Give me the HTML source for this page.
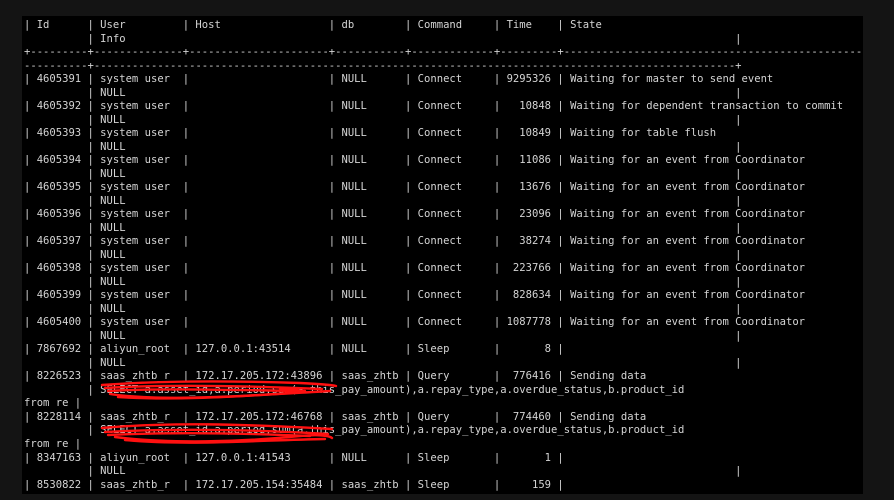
<!DOCTYPE html>
<html><head><meta charset="utf-8"><style>
html,body{margin:0;padding:0;background:#141414;width:894px;height:500px;overflow:hidden}
#t{position:absolute;left:22px;top:16px;width:841px;height:478px;background:#000}
#p{position:absolute;left:24px;top:19px;font-family:"DejaVu Sans Mono","Liberation Mono",monospace;font-size:10.55px;color:#d4d4d4}
.l{position:relative;height:13.53px;line-height:13.53px;white-space:pre}
.l>span{position:absolute;top:0}
.a{left:0}.b{left:10ch}.c{left:25ch}.d{left:48ch}.e{left:60ch}.f{left:74ch}.g{left:84ch}
.r{left:112ch}
.d1{width:132ch;overflow:hidden}
.d2{width:112ch;overflow:hidden}
svg{position:absolute;left:0;top:0}
</style></head><body>
<div id="t"></div>
<div id="p">
<div class="l"><span class="a">| Id</span><span class="b">| User</span><span class="c">| Host</span><span class="d">| db</span><span class="e">| Command</span><span class="f">| Time</span><span class="g">| State</span></div>
<div class="l"><span class="b">| Info</span><span class="r">|</span></div>
<div class="l d1">+---------+--------------+----------------------+-----------+-------------+---------+------------------------------------------------------------------</div>
<div class="l"><span class="a d2">----------+------------------------------------------------------------------------------------------------------------------</span><span class="r">+</span></div>

<div class="l"><span class="a">| 4605391</span><span class="b">| system user</span><span class="c">|</span><span class="d">| NULL</span><span class="e">| Connect</span><span class="f">| 9295326</span><span class="g">| Waiting for master to send event</span></div>
<div class="l"><span class="b">| NULL</span><span class="r">|</span></div>
<div class="l"><span class="a">| 4605392</span><span class="b">| system user</span><span class="c">|</span><span class="d">| NULL</span><span class="e">| Connect</span><span class="f">|   10848</span><span class="g">| Waiting for dependent transaction to commit</span></div>
<div class="l"><span class="b">| NULL</span><span class="r">|</span></div>
<div class="l"><span class="a">| 4605393</span><span class="b">| system user</span><span class="c">|</span><span class="d">| NULL</span><span class="e">| Connect</span><span class="f">|   10849</span><span class="g">| Waiting for table flush</span></div>
<div class="l"><span class="b">| NULL</span><span class="r">|</span></div>
<div class="l"><span class="a">| 4605394</span><span class="b">| system user</span><span class="c">|</span><span class="d">| NULL</span><span class="e">| Connect</span><span class="f">|   11086</span><span class="g">| Waiting for an event from Coordinator</span></div>
<div class="l"><span class="b">| NULL</span><span class="r">|</span></div>
<div class="l"><span class="a">| 4605395</span><span class="b">| system user</span><span class="c">|</span><span class="d">| NULL</span><span class="e">| Connect</span><span class="f">|   13676</span><span class="g">| Waiting for an event from Coordinator</span></div>
<div class="l"><span class="b">| NULL</span><span class="r">|</span></div>
<div class="l"><span class="a">| 4605396</span><span class="b">| system user</span><span class="c">|</span><span class="d">| NULL</span><span class="e">| Connect</span><span class="f">|   23096</span><span class="g">| Waiting for an event from Coordinator</span></div>
<div class="l"><span class="b">| NULL</span><span class="r">|</span></div>
<div class="l"><span class="a">| 4605397</span><span class="b">| system user</span><span class="c">|</span><span class="d">| NULL</span><span class="e">| Connect</span><span class="f">|   38274</span><span class="g">| Waiting for an event from Coordinator</span></div>
<div class="l"><span class="b">| NULL</span><span class="r">|</span></div>
<div class="l"><span class="a">| 4605398</span><span class="b">| system user</span><span class="c">|</span><span class="d">| NULL</span><span class="e">| Connect</span><span class="f">|  223766</span><span class="g">| Waiting for an event from Coordinator</span></div>
<div class="l"><span class="b">| NULL</span><span class="r">|</span></div>
<div class="l"><span class="a">| 4605399</span><span class="b">| system user</span><span class="c">|</span><span class="d">| NULL</span><span class="e">| Connect</span><span class="f">|  828634</span><span class="g">| Waiting for an event from Coordinator</span></div>
<div class="l"><span class="b">| NULL</span><span class="r">|</span></div>
<div class="l"><span class="a">| 4605400</span><span class="b">| system user</span><span class="c">|</span><span class="d">| NULL</span><span class="e">| Connect</span><span class="f">| 1087778</span><span class="g">| Waiting for an event from Coordinator</span></div>
<div class="l"><span class="b">| NULL</span><span class="r">|</span></div>
<div class="l"><span class="a">| 7867692</span><span class="b">| aliyun_root</span><span class="c">| 127.0.0.1:43514</span><span class="d">| NULL</span><span class="e">| Sleep</span><span class="f">|       8</span><span class="g">|</span></div>
<div class="l"><span class="b">| NULL</span><span class="r">|</span></div>
<div class="l"><span class="a">| 8226523</span><span class="b">| saas_zhtb_r</span><span class="c">| 172.17.205.172:43896</span><span class="d">| saas_zhtb</span><span class="e">| Query</span><span class="f">|  776416</span><span class="g">| Sending data</span></div>
<div class="l"><span class="b">| SELECT a.asset_id,a.period,sum(a.this_pay_amount),a.repay_type,a.overdue_status,b.product_id</span></div>
<div class="l"><span class="a">from re |</span></div>
<div class="l"><span class="a">| 8228114</span><span class="b">| saas_zhtb_r</span><span class="c">| 172.17.205.172:46768</span><span class="d">| saas_zhtb</span><span class="e">| Query</span><span class="f">|  774460</span><span class="g">| Sending data</span></div>
<div class="l"><span class="b">| SELECT a.asset_id,a.period,sum(a.this_pay_amount),a.repay_type,a.overdue_status,b.product_id</span></div>
<div class="l"><span class="a">from re |</span></div>
<div class="l"><span class="a">| 8347163</span><span class="b">| aliyun_root</span><span class="c">| 127.0.0.1:41543</span><span class="d">| NULL</span><span class="e">| Sleep</span><span class="f">|       1</span><span class="g">|</span></div>
<div class="l"><span class="b">| NULL</span><span class="r">|</span></div>
<div class="l"><span class="a">| 8530822</span><span class="b">| saas_zhtb_r</span><span class="c">| 172.17.205.154:35484</span><span class="d">| saas_zhtb</span><span class="e">| Sleep</span><span class="f">|     159</span><span class="g">|</span></div>
</div>
<svg width="894" height="500" viewBox="0 0 894 500">
<g fill="none" stroke="#ff1010" stroke-width="2.4" stroke-linecap="round">
<path d="M102 385 C170 380 240 381 300 383 C320 384 332 385 336 386"/>
<path d="M105 388 C170 384 250 386 322 389"/>
<path d="M108 391 C160 388 230 390 305 391"/>
<path d="M110 394 C150 400 220 398 290 393 C305 392 300 388 280 389"/>
<path d="M118 397 C180 401 240 396 330 391"/>
<path d="M102 428 C170 422 240 424 332 429"/>
<path d="M105 432 C180 428 260 430 328 434"/>
<path d="M108 435 C170 432 240 433 310 436"/>
<path d="M115 437 C170 444 240 442 300 436 C320 434 330 436 332 438"/>
<path d="M125 440 C190 446 260 440 325 439"/>
</g>
</svg>
</body></html>
